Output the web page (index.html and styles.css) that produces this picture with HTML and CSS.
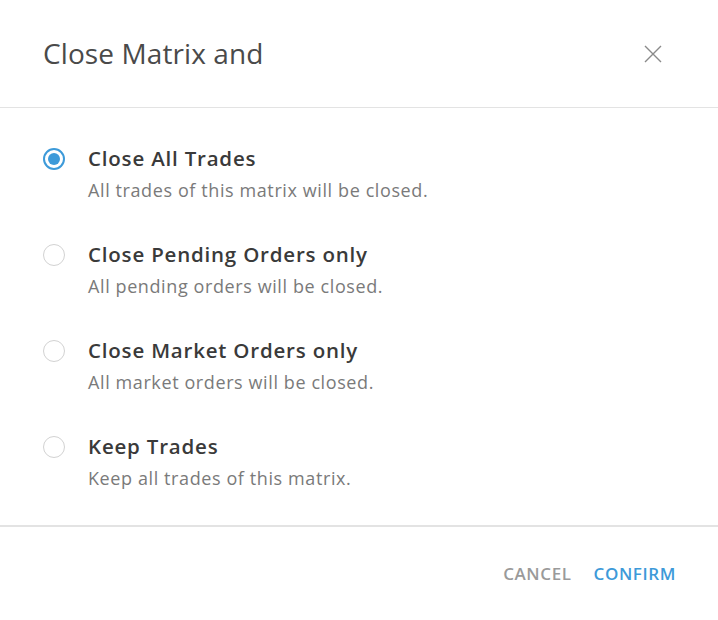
FILE: index.html
```html
<!DOCTYPE html>
<html lang="en">
<head>
<meta charset="utf-8">
<title>Close Matrix and</title>
<link rel="stylesheet" href="styles.css">
</head>
<body>
<div class="dialog">
  <header class="dialog-header">
    <h1 class="dialog-title">Close Matrix and</h1>
    <button class="close-btn" aria-label="Close">
      <svg width="18" height="18" viewBox="0 0 18 18"><path d="M1 1 L17 17 M17 1 L1 17" stroke="#8a8a8a" stroke-width="1.4" fill="none"/></svg>
    </button>
  </header>
  <div class="dialog-body">
    <label class="option">
      <span class="radio checked"><span class="dot"></span></span>
      <span class="option-text">
        <span class="option-title">Close All Trades</span>
        <span class="option-desc">All trades of this matrix will be closed.</span>
      </span>
    </label>
    <label class="option">
      <span class="radio"></span>
      <span class="option-text">
        <span class="option-title">Close Pending Orders only</span>
        <span class="option-desc">All pending orders will be closed.</span>
      </span>
    </label>
    <label class="option">
      <span class="radio"></span>
      <span class="option-text">
        <span class="option-title">Close Market Orders only</span>
        <span class="option-desc">All market orders will be closed.</span>
      </span>
    </label>
    <label class="option">
      <span class="radio"></span>
      <span class="option-text">
        <span class="option-title">Keep Trades</span>
        <span class="option-desc">Keep all trades of this matrix.</span>
      </span>
    </label>
  </div>
  <footer class="dialog-footer">
    <button class="btn btn-cancel">CANCEL</button>
    <button class="btn btn-confirm">CONFIRM</button>
  </footer>
</div>
</body>
</html>
```
FILE: styles.css
```css
* { box-sizing: border-box; }
html, body {
  margin: 0;
  padding: 0;
  background: #fff;
}
body {
  font-family: "Open Sans", "Liberation Sans", sans-serif;
  color: #3a3a3a;
}
.dialog {
  width: 718px;
  height: 620px;
  display: flex;
  flex-direction: column;
}
.dialog-header {
  height: 108px;
  display: flex;
  align-items: center;
  justify-content: space-between;
  padding: 0 56px 0 43px;
  border-bottom: 1px solid #e3e3e3;
}
.dialog-title {
  margin: 0;
  font-size: 28px;
  font-weight: 400;
  color: #4a4a4a;
  letter-spacing: 0.1px;
  position: relative;
  top: -1px;
}
.close-btn {
  border: 0;
  background: none;
  padding: 0;
  width: 18px;
  height: 18px;
  display: flex;
  cursor: pointer;
}
.dialog-body {
  padding: 36px 43px 32px;
  display: flex;
  flex-direction: column;
  gap: 35px;
  border-bottom: 2px solid #e3e3e3;
}
.option {
  display: flex;
  align-items: flex-start;
  gap: 23px;
  cursor: pointer;
}
.radio {
  width: 22px;
  height: 22px;
  border-radius: 50%;
  border: 1px solid #d2d2d2;
  margin-top: 4px;
  display: flex;
  align-items: center;
  justify-content: center;
  flex: none;
}
.radio.checked {
  border: 2px solid #3d9ad9;
}
.radio .dot {
  width: 12px;
  height: 12px;
  border-radius: 50%;
  background: #3d9ad9;
}
.option-text {
  display: flex;
  flex-direction: column;
}
.option-title {
  font-size: 20.5px;
  line-height: 28px;
  font-weight: 600;
  letter-spacing: 0.8px;
  color: #3a3a3a;
}
.option-desc {
  margin-top: 3px;
  font-size: 18px;
  line-height: 30px;
  letter-spacing: 0.6px;
  color: #7a7a7a;
}
.dialog-footer {
  flex: 1;
  display: flex;
  justify-content: flex-end;
  align-items: center;
  gap: 22px;
  padding: 0 42px 0 0;
}
.btn {
  border: 0;
  background: none;
  padding: 0;
  font-family: inherit;
  font-size: 17px;
  font-weight: 600;
  letter-spacing: 0.6px;
  cursor: pointer;
}
.btn-cancel { color: #9a9a9a; }
.btn-confirm { color: #3d9ad9; }
```
